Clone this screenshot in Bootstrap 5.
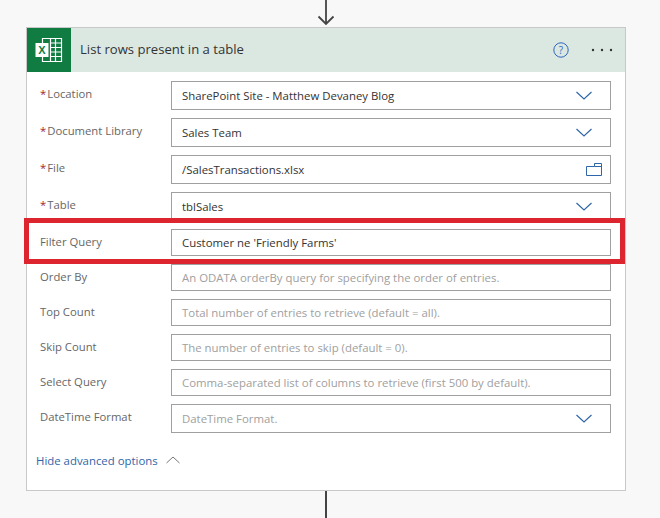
<!DOCTYPE html>
<html lang="en"><head><meta charset="utf-8"><title>List rows</title>
<link href="https://cdn.jsdelivr.net/npm/bootstrap@5.3.0/dist/css/bootstrap.min.css" rel="stylesheet">
<style>
html,body{height:518px;overflow:hidden}
body{background:#f8f8f8;font-family:"Open Sans","Liberation Sans",sans-serif;font-size:11.4px;color:#333}
.arrow-top{display:block;margin-left:316px;height:27px;width:20px}
.arrow-bottom{display:block;margin-left:325px;width:2px;height:28px;background:#444}
.flow-card{margin-left:26px;width:600px;height:464px;border:1px solid #c8c8c8;background:#fff;border-radius:0}
.flow-head{height:44px;background:#dbe8e2}
.flow-logo{width:44px;height:44px;background:#107c41}
.flow-title{font-size:13.1px;color:#333;margin-left:9px}
.flow-help{margin-right:22px}
.flow-more{margin-right:12px}
.flow-body{padding:9px 14px 0 13px}
.f-row{height:28.5px;margin-bottom:8.5px;position:relative}
.f-row.adv{height:27px;margin-bottom:8px}
.f-label{width:131px;font-size:11.3px;color:#666;line-height:16px;padding-top:5px;flex:none}
.f-label b{color:#a4262c;font-weight:400;margin-right:1px}
.f-box{flex:1;border:1px solid #a0a0a0;padding:1px 10px 0;color:#333;background:#fff}
.f-box.ph{color:#a0a0a0}
.f-chev{margin-right:8px}
.f-folder{margin-right:-2px}
.hl-frame{position:absolute;left:-16px;right:-14px;top:-11.5px;height:46px;border:5px solid #dd2530;pointer-events:none}
.adv-link{margin-top:19px;margin-left:-4px;font-size:11.4px;color:#2f66a8}
</style></head><body>
<svg class="arrow-top" viewBox="0 0 20 27"><path d="M10 0V24M2.500 16.500L10 24L17.500 16.500" fill="none" stroke="#444" stroke-width="1.800"/></svg>
<div class="flow-card card">
  <div class="flow-head d-flex align-items-center">
    <div class="flow-logo d-flex align-items-center justify-content-center">
      <svg width="28" height="26" viewBox="0 0 28 26"><path d="M7.500 1.500H26.500V24.500H7.500ZM15.500 1.500V24.500M20.500 1.500V24.500M15.500 6H26.500M15.500 10.500H26.500M15.500 15H26.500M15.500 19.500H26.500" fill="none" stroke="#fff" stroke-width="1.200"/><rect x="0.500" y="6" width="13" height="14" fill="#fff"/><text x="7" y="17" text-anchor="middle" font-size="11" font-weight="700" fill="#107c41" font-family="Liberation Sans">X</text></svg>
    </div>
    <div class="flow-title flex-grow-1">List rows present in a table</div>
    <svg class="flow-help" width="16" height="16" viewBox="0 0 16 16"><circle cx="8" cy="8" r="7.200" fill="none" stroke="#2f66c0" stroke-width="1"/><text x="8" y="11.500" text-anchor="middle" font-size="10" fill="#2f66c0" font-family="Open Sans">?</text></svg>
    <svg class="flow-more" width="22" height="4" viewBox="0 0 22 4"><circle cx="2" cy="2" r="1.200" fill="#333"/><circle cx="11" cy="2" r="1.200" fill="#333"/><circle cx="20" cy="2" r="1.200" fill="#333"/></svg>
  </div>
  <div class="flow-body">
    <div class="f-row d-flex"><div class="f-label"><b>*</b>Location</div><div class="f-box d-flex align-items-center justify-content-between"><span>SharePoint Site - Matthew Devaney Blog</span><svg class="f-chev" width="16" height="9" viewBox="0 0 16 9"><path d="M.5 1L8 8L15.500 1" fill="none" stroke="#2f66a8" stroke-width="1.200"/></svg></div></div>
    <div class="f-row d-flex"><div class="f-label"><b>*</b>Document Library</div><div class="f-box d-flex align-items-center justify-content-between"><span>Sales Team</span><svg class="f-chev" width="16" height="9" viewBox="0 0 16 9"><path d="M.5 1L8 8L15.500 1" fill="none" stroke="#2f66a8" stroke-width="1.200"/></svg></div></div>
    <div class="f-row d-flex"><div class="f-label"><b>*</b>File</div><div class="f-box d-flex align-items-center justify-content-between"><span>/SalesTransactions.xlsx</span><svg class="f-folder" width="16" height="13" viewBox="0 0 16 13"><path d="M.5 3.500H8.500L8.500 .5H15.500V12.500H.5ZM8.500 3.500H15.500" fill="none" stroke="#2f66a8" stroke-width="1"/></svg></div></div>
    <div class="f-row d-flex"><div class="f-label"><b>*</b>Table</div><div class="f-box d-flex align-items-center justify-content-between"><span>tblSales</span><svg class="f-chev" width="16" height="9" viewBox="0 0 16 9"><path d="M.5 1L8 8L15.500 1" fill="none" stroke="#2f66a8" stroke-width="1.200"/></svg></div></div>
    <div class="f-row adv d-flex"><div class="f-label">Filter Query</div><div class="f-box d-flex align-items-center">Customer ne 'Friendly Farms'</div><div class="hl-frame"></div></div>
    <div class="f-row adv d-flex"><div class="f-label">Order By</div><div class="f-box ph d-flex align-items-center">An ODATA orderBy query for specifying the order of entries.</div></div>
    <div class="f-row adv d-flex"><div class="f-label">Top Count</div><div class="f-box ph d-flex align-items-center">Total number of entries to retrieve (default = all).</div></div>
    <div class="f-row adv d-flex"><div class="f-label">Skip Count</div><div class="f-box ph d-flex align-items-center">The number of entries to skip (default = 0).</div></div>
    <div class="f-row adv d-flex"><div class="f-label">Select Query</div><div class="f-box ph d-flex align-items-center">Comma-separated list of columns to retrieve (first 500 by default).</div></div>
    <div class="f-row d-flex"><div class="f-label">DateTime Format</div><div class="f-box ph d-flex align-items-center justify-content-between"><span>DateTime Format.</span><svg class="f-chev" width="16" height="9" viewBox="0 0 16 9"><path d="M.5 1L8 8L15.500 1" fill="none" stroke="#2f66a8" stroke-width="1.200"/></svg></div></div>
    <div class="adv-link d-flex align-items-center gap-2"><span>Hide advanced options</span><svg width="14" height="8" viewBox="0 0 14 8"><path d="M.5 7L7 1L13.500 7" fill="none" stroke="#777" stroke-width="1"/></svg></div>
  </div>
</div>
<div class="arrow-bottom"></div>
<script src="https://cdn.jsdelivr.net/npm/bootstrap@5.3.0/dist/js/bootstrap.bundle.min.js"></script>
</body></html>
